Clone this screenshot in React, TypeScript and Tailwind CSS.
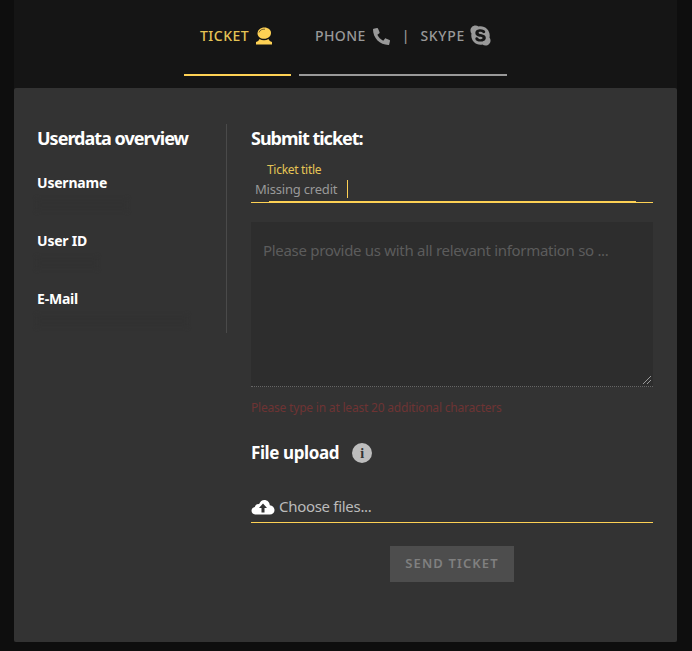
import { FaPhone, FaSkype } from "react-icons/fa";

const font = { fontFamily: '"Noto Sans", sans-serif' };

function AgentIcon() {
  return (
    <svg viewBox="0 0 18 18" className="h-[18px] w-[18px] fill-[#fed154]">
      <path d="M9.500.5c3.700 0 6.500 2.400 6.500 5.500 0 3-2.800 5.800-7 5.800-3.600 0-6.500-2.400-6.500-5.400C2.500 3 5.500.5 9.500.5z" />
      <path d="M4.500 12c1.300.8 2.800 1.200 4.500 1.200s3.200-.4 4.500-1.200c.6 1.500 1.800 2.500 3.500 3v2.500H1V15c1.700-.5 2.900-1.500 3.500-3z" />
      <path d="M4 5.500C5 3 7 2 10 2.200" fill="none" stroke="#151515" strokeWidth=".6" />
    </svg>
  );
}

function CloudIcon() {
  return (
    <svg viewBox="0 0 24 16" className="h-[16px] w-[24px]">
      <path
        fill="#ffffff"
        d="M5 15.500c-2.700 0-4.500-1.700-4.500-3.800 0-1.900 1.300-3.300 3.300-3.700C4.400 5.800 6.200 4.800 8 5.200 9.200 2.500 11 1 13.300 1c3 0 5.300 2.200 5.500 5.200 2.800.4 4.700 2.400 4.700 5 0 2.500-2 4.300-4.700 4.300z"
      />
      <path fill="#333333" d="M12 4.500 16 9h-2.500v4.500h-3V9H8z" />
    </svg>
  );
}

function Field({ label, blur }: { label: string; blur: string }) {
  return (
    <div className="h-[58px]">
      <p className="text-[14px] leading-[20px] font-bold tracking-[-0.2px] text-white">{label}</p>
      <div className={`mt-[6px] h-[12px] bg-[#323232] blur-[2px] ${blur}`} />
    </div>
  );
}

export default function App() {
  return (
    <div className="h-[651px] w-[692px] overflow-hidden bg-[#0e0e0e] pl-[14px] pr-[15px]" style={font}>
      <div className="h-[642px] bg-[#151515] pt-[4px]">
        <nav className="flex h-[84px] pl-[170px]">
          <div className="h-[72px] w-[107px] border-b-2 border-[#fed154] pl-[16px] pt-[22px]">
            <span className="flex items-center gap-[6px] text-[14px] leading-[20px] font-medium tracking-[0.5px] text-[#e5c455]">
              TICKET <AgentIcon />
            </span>
          </div>
          <div className="ml-[8px] flex h-[72px] w-[208px] items-start border-b-2 border-[#999999] pl-[16px] pt-[22px] text-[14px] leading-[20px] font-medium tracking-[0.4px] text-[#999999]">
            <span className="flex items-center gap-[7px]">
              PHONE <FaPhone className="h-[17px] w-[17px] -scale-x-100" />
            </span>
            <span className="ml-[12px] mr-[11px] tracking-normal">|</span>
            <span className="-mt-[2px] flex items-center gap-[4px] tracking-[0.7px]">
              SKYPE <FaSkype className="h-[23px] w-[23px]" />
            </span>
          </div>
        </nav>

        <main className="flex h-[554px] rounded-[2px] bg-[#333333] pt-[36px]">
          <aside className="ml-[23px] h-[209px] w-[190px] border-r border-[#4a4a4a]">
            <h2 className="text-[18px] leading-[28px] font-bold tracking-[-1px] text-white">Userdata overview</h2>
            <div className="mt-[21px]">
              <Field label="Username" blur="w-[90px]" />
              <Field label="User ID" blur="w-[60px]" />
              <Field label="E-Mail" blur="w-[150px]" />
            </div>
          </aside>

          <section className="ml-[24px] w-[402px]">
            <h2 className="text-[18px] leading-[28px] font-bold tracking-[-1px] text-white">Submit ticket:</h2>

            <div className="relative mt-[3px] h-[48px] border-b border-[#fed154]">
              <span className="absolute top-[7px] left-[16px] text-[12px] leading-[16px] tracking-[-0.3px] text-[#e5c455]">
                Ticket title
              </span>
              <div className="flex pt-[25px] pl-[4px]">
                <span className="text-[13px] leading-[18px] tracking-[-0.2px] text-[#999999]">Missing credit</span>
                <span className="ml-[10px] h-[18px] w-px bg-[#fed154]" />
              </div>
              <span className="absolute right-[17px] -bottom-px left-[18px] h-[2px] bg-[#fed154]" />
            </div>

            <div className="relative mt-[19px] h-[165px] border-b border-dotted border-[#666666] bg-[#2d2d2d] px-[12px] pt-[16px] text-[15px] leading-[24px] tracking-[-0.3px] text-[#5c5c5c]">
              Please provide us with all relevant information so ...
              <svg viewBox="0 0 10 10" className="absolute right-[1px] bottom-[1px] h-[10px] w-[10px] stroke-[#999999]">
                <path d="M1 9 9 1M5 9 9 5" />
              </svg>
            </div>

            <p className="mt-[13px] text-[12px] leading-[16px] tracking-[-0.2px] text-[#6e3333]">
              Please type in at least 20 additional characters
            </p>

            <div className="mt-[23px] flex items-center gap-[13px]">
              <h2 className="text-[17px] leading-[28px] font-bold tracking-[-0.4px] text-white">File upload</h2>
              <span className="flex h-[20px] w-[20px] items-center justify-center rounded-full bg-[#bdbdbd] font-['Liberation_Serif',serif] text-[14px] font-bold text-[#333333]">
                i
              </span>
            </div>

            <div className="mt-[24px] flex h-[32px] items-center gap-[4px] border-b border-[#fed154] text-[15px] tracking-[-0.3px] text-[#bbbbbb]">
              <CloudIcon />
              Choose files...
            </div>

            <div className="mt-[23px] flex justify-center">
              <button className="h-[36px] w-[124px] bg-[#4d4d4d] text-[13px] font-semibold tracking-[1.1px] text-[#808080]">
                SEND TICKET
              </button>
            </div>
          </section>
        </main>
      </div>
    </div>
  );
}
